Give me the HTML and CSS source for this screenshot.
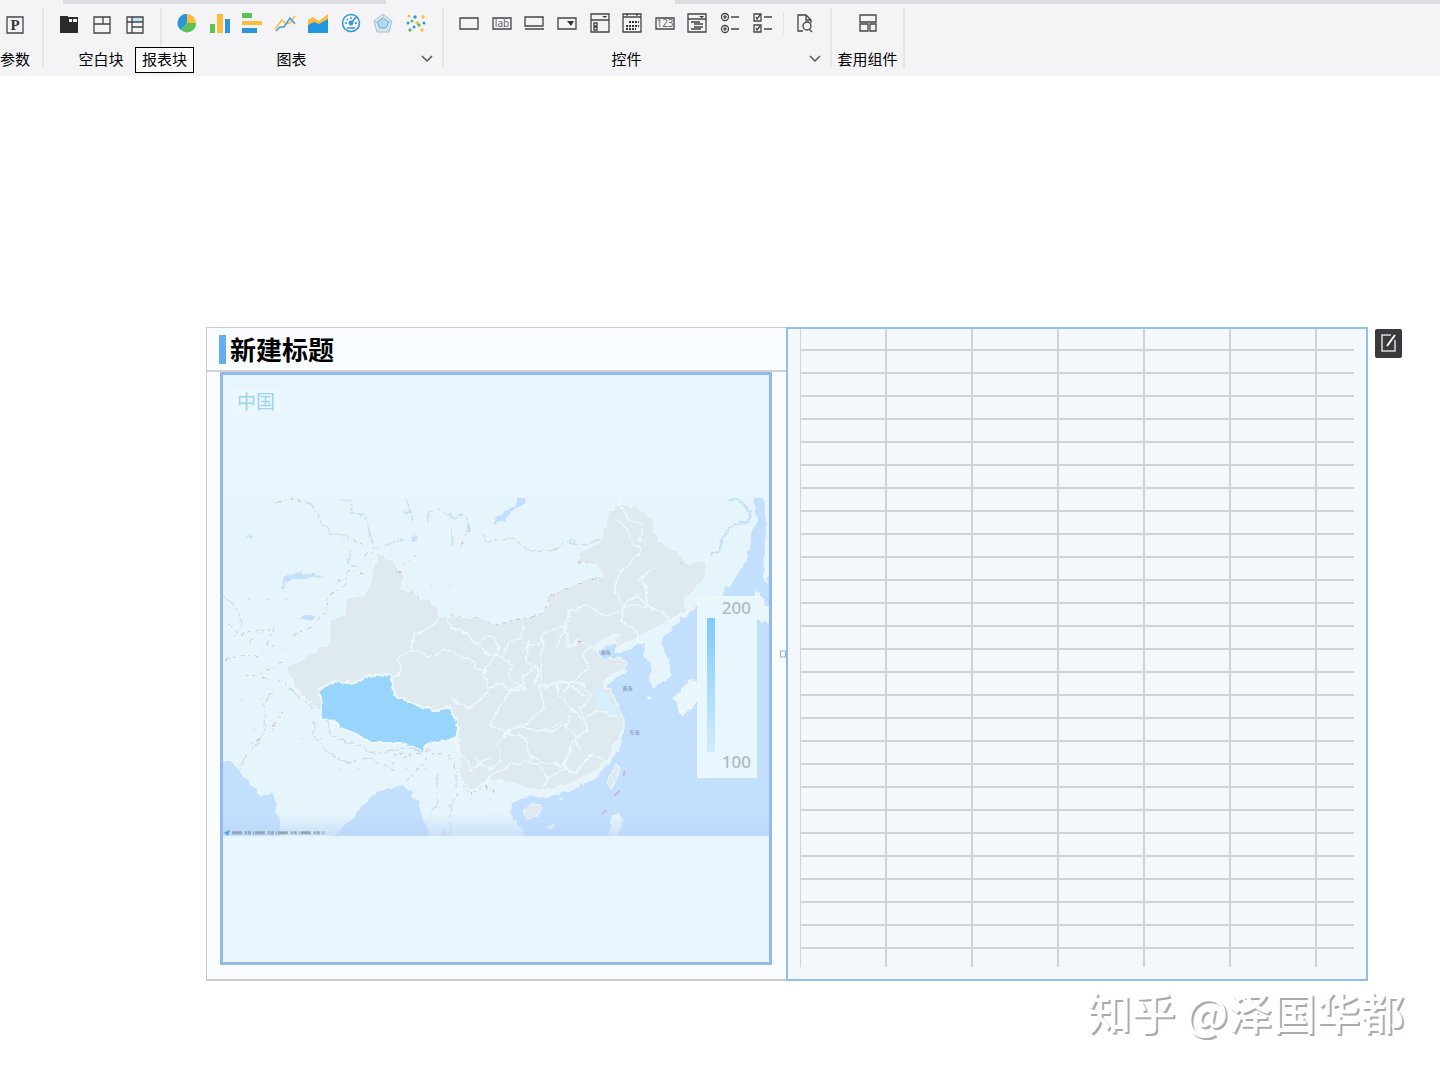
FILE: index.html
```html
<!DOCTYPE html>
<html lang="zh-CN">
<head>
<meta charset="utf-8">
<title>报表设计</title>
<link rel="stylesheet" href="styles.css">
</head>
<body>
<div class="tabstrip"><span class="tab tab-gap"></span><span class="tab tab-mid"></span><span class="tab tab-active"></span><span class="tab tab-rest"></span></div>
<header class="toolbar">
  <section class="group group-param">
    <div class="icons">
      <button class="tool" aria-label="参数"><svg viewBox="0 0 22 22"><path class="ln" d="M3 5h16v16H3z"/><text x="11" y="18" class="p-letter">P</text></svg></button>
    </div>
    <div class="caption"><span>参数</span></div>
  </section>
  <section class="group group-block">
    <div class="icons">
      <button class="tool" aria-label="空白块"><svg viewBox="0 0 22 22"><path fill="#2b2b2e" d="M2 4h8v1h10v16H2z"/><path fill="#f4f4f7" d="M11 7h3v3h-3zM15 7h4v3h-4z"/></svg></button>
      <button class="tool" aria-label="分块"><svg viewBox="0 0 22 22"><path class="ln" d="M3 5h16v16H3zM3 12h16M12 5v7"/></svg></button>
      <button class="tool" aria-label="报表块"><svg viewBox="0 0 22 22"><path fill="#bfe6f7" d="M8 5h12v5H8z"/><path class="ln" d="M3 5h16v16H3zM3 10h16M8 5v16M8 15h11"/></svg></button>
    </div>
    <div class="caption"><span>空白块</span></div>
    <span class="tip" role="tooltip">报表块</span>
  </section>
  <section class="group group-chart">
    <div class="icons">
      <button class="tool" aria-label="饼图"><svg viewBox="0 0 22 22"><path fill="#fcbc3c" d="M11 11V2a9 9 0 0 1 9 9z"/><path fill="#5bc254" d="M11 11h9a9 9 0 0 1-15 7z"/><path fill="#2c95dc" d="M11 11l-6 7A9 9 0 0 1 11 2z"/></svg></button>
      <button class="tool" aria-label="柱形图"><svg viewBox="0 0 22 22"><path fill="#5bc254" d="M1 12h5v9H1z"/><path fill="#fcbc3c" d="M8 2h6v19H8z"/><path fill="#2c95dc" d="M16 7h5v14h-5z"/></svg></button>
      <button class="tool" aria-label="条形图"><svg viewBox="0 0 22 22"><path fill="#5bc254" d="M1 1h10v5H1z"/><path fill="#fcbc3c" d="M1 9h20v4H1z"/><path fill="#2c95dc" d="M1 16h15v5H1z"/></svg></button>
      <button class="tool" aria-label="折线图"><svg viewBox="0 0 22 22" fill="none" stroke-width="1.5"><path stroke="#fcbc3c" d="M1 17l7-9 4 4 4-1 5-7"/><path stroke="#3f9ddc" d="M2 19l4-4h4l6-9 5 6"/></svg></button>
      <button class="tool" aria-label="面积图"><svg viewBox="0 0 22 22"><path fill="#fcbc3c" d="M1 8l5-3 6 4 9-7v12H1z"/><path fill="#2196e3" d="M1 13l6-3 5 2 9-5v14H1z"/></svg></button>
      <button class="tool" aria-label="仪表盘"><svg viewBox="0 0 22 22" fill="none" stroke="#2c95dc"><circle cx="11" cy="11" r="8.500" stroke-width="1.500"/><path stroke-width="1.500" d="M5 11h2M15 11h2M11 5v2M7 7l1 1M7 16h8M12 10l4-5"/><circle cx="11" cy="11" r="2" fill="#2c95dc"/></svg></button>
      <button class="tool" aria-label="雷达图"><svg viewBox="0 0 22 22"><path fill="#dbe8f0" stroke="#a9bfce" d="M11 2l9 7-3 11H5L2 9z"/><path fill="#b5daf2" stroke="#5aa9dd" d="M11 6l6 4-3 6H8L5 10z"/><path fill="none" stroke="#b4cfe0" stroke-width=".7" d="M11 2v9l9-2M11 11l6 9M11 11l-6 9M11 11L2 9"/></svg></button>
      <button class="tool" aria-label="散点图"><svg viewBox="0 0 22 22"><g fill="#fcbc3c"><circle cx="4" cy="4" r="1.500"/><circle cx="18" cy="5" r="1.700"/><circle cx="12" cy="11" r="1.700"/><circle cx="17" cy="18" r="1.700"/></g><g fill="#2c95dc"><circle cx="10" cy="5" r="1.700"/><circle cx="3" cy="11" r="1.500"/><circle cx="19" cy="11" r="1.500"/><circle cx="9" cy="15" r="1.500"/></g><g fill="#5bc254"><circle cx="7" cy="9" r="1.500"/><circle cx="14" cy="13" r="1.700"/><circle cx="5" cy="18" r="1.700"/></g></svg></button>
    </div>
    <div class="caption"><span>图表</span><button class="more" aria-label="更多图表"><svg viewBox="0 0 12 8"><path d="M1 1l5 5 5-5"/></svg></button></div>
  </section>
  <section class="group group-control">
    <div class="icons">
      <button class="tool" aria-label="文本框"><svg viewBox="0 0 22 22"><path class="ln" d="M2 6h18v11H2z"/></svg></button>
      <button class="tool" aria-label="标签"><svg viewBox="0 0 22 22"><path class="ln" d="M2 6h18v11H2z"/><text x="11" y="15" class="tiny">lab</text></svg></button>
      <button class="tool" aria-label="按钮"><svg viewBox="0 0 22 22"><path class="ln" d="M2 5h18v9H2zM2 17h19"/></svg></button>
      <button class="tool" aria-label="下拉框"><svg viewBox="0 0 22 22"><path class="ln" d="M2 6h18v11H2z"/><path fill="#333" d="M11 9h7l-3 5z"/></svg></button>
      <button class="tool" aria-label="下拉复选框"><svg viewBox="0 0 22 22"><path class="ln" d="M2 2h18v18H2zM2 8h18M5 11h3v3H5zM5 15h3v3H5z"/><path fill="#333" d="M13 4h5l-2 2z"/></svg></button>
      <button class="tool" aria-label="日期"><svg viewBox="0 0 22 22"><path class="ln" d="M2 2h18v18H2zM2 5h18M6 1v3M16 1v3"/><path stroke="#333" stroke-width="2" stroke-dasharray="2 1" d="M8 10h10M5 14h13M5 17h10"/></svg></button>
      <button class="tool" aria-label="数字"><svg viewBox="0 0 22 22"><path class="ln" d="M2 6h18v11H2z"/><text x="11" y="15" class="tiny">123</text></svg></button>
      <button class="tool" aria-label="下拉树"><svg viewBox="0 0 22 22"><path class="ln" d="M2 2h18v18H2zM2 7h18M5 10h9M8 12h9M8 15h9M5 17h10"/><path fill="#333" d="M13 4h5l-2 2z"/></svg></button>
      <button class="tool" aria-label="单选按钮组"><svg viewBox="0 0 22 22"><g class="ln"><circle cx="6" cy="5" r="3.500"/><circle cx="6" cy="5" r="1"/><circle cx="6" cy="17" r="3.500"/><circle cx="6" cy="17" r="1"/><path d="M12 5h8M12 17h8"/></g></svg></button>
      <button class="tool" aria-label="复选框组"><svg viewBox="0 0 22 22"><path class="ln" d="M2 2h7v7H2zM2 13h7v7H2zM4 5l1 2 3-4M4 16l1 2 3-4M12 5h8M12 17h8"/></svg></button>
      <span class="divider"></span>
      <button class="tool" aria-label="查询"><svg viewBox="0 0 22 22"><path class="ln" d="M9 19H4V3h8l5 5v3M12 3v5h5"/><circle class="ln" cx="13" cy="14" r="4"/><path class="ln" d="M15 17l3 3"/></svg></button>
    </div>
    <div class="caption"><span>控件</span><button class="more" aria-label="更多控件"><svg viewBox="0 0 12 8"><path d="M1 1l5 5 5-5"/></svg></button></div>
  </section>
  <section class="group group-widget">
    <div class="icons">
      <button class="tool" aria-label="套用组件"><svg viewBox="0 0 22 22"><path class="ln" d="M3 3h16v7H3zM3 12h8v7H3zM13 12h6v7h-6z"/></svg></button>
    </div>
    <div class="caption"><span>套用组件</span></div>
  </section>
</header>
<main class="canvas">
  <div class="board">
    <section class="pane">
      <h1 class="title">新建标题</h1>
      <div class="chart">
        <div class="crumb">中国</div>
        <div class="map">
          <svg viewBox="222 498 548 339" role="img" aria-label="中国地图">
            <defs>
              <filter id="coast" x="-5%" y="-5%" width="110%" height="110%" color-interpolation-filters="sRGB"><feTurbulence type="fractalNoise" baseFrequency="0.120" numOctaves="3" seed="4"/><feDisplacementMap in="SourceGraphic" scale="7" xChannelSelector="R" yChannelSelector="G"/></filter>
              <linearGradient id="foot" x1="0" y1="0" x2="0" y2="1"><stop offset="0" stop-color="#b9d3f6" stop-opacity="0"/><stop offset="1" stop-color="#b9d3f6" stop-opacity=".6"/></linearGradient>
            </defs>
            <rect x="222" y="498" width="548" height="339" fill="#e6f4fb"/>
            <g filter="url(#coast)">
              <g fill="#c3dffe">
                <path d="M754 490l4 30-6 20-5 23-12 18-15 16-30 15-15 14-15 17 7 10 5 10 0 14-19 13-3-7 2-20-9-6 4-14-17 7-13 5-2-6 6-7-13 3-14 10 10 11 14 0 10 4-3 5-15 8-5 10 8 9 7 12 5 16-4 14-11 20-14 15-23 12-30 8-13-2-17 7-3 10 8 12 12 18 260 5V490z"/>
                <path d="M215 762h15l17 21 13 15 10-5 5 10 5 42h-65z"/>
                <path d="M328 843l25-26 24-24 26-7 17 21 10 36zM437 843l8-12 5 12z"/>
                <path d="M492 524l9-10 10-6 10-12h6l-4 8-12 8-8 10z"/>
                <path d="M279 588l5-10 12-5 24 3 2 2-26 0-12 5-1 7zM246 535l7-1-3 4zM300 619l6-4h8l-3 5-6 1zM334 580l6 1-2 4zM411 536l6 0 1 5-6 0zM467 525l3-1-1 10-3-2zM402 510l9 1-4 3zM348 561l4 4 7 2-6 1z"/>
              </g>
              <g fill="#e9f7fc">
                <path d="M763 490h9v60l-3 34-5-6 1-30 3-20zM757 590l10 14 6 10v14l-16-10zM673 700l10-12 8-7 9 1-2 18-8 12-7 6-4-10-4-5zM612 817l8-3 4 8-5 14-12 3 4-8zM648 697h4v3h-4zM560 798h3v2h-3zM547 827l8-1-2 6z"/>
              </g>
              <path fill="#deeaef" stroke="#eff9fd" d="M377 553l15 8 10 9v20l18 7 17 10 3 10 33 1 24 7 20-5 23-5 8-10-1-8 20-9 23-10 15-2-8-11-19-3 5-12 17-8 7-19 3-13 13-7 20 7 10 10 5 20 19 12 13 13 18-5-5 20-8 12-10 5 2 13-10 7-17 10-13 6-17 10-13 5-2-6 6-7-13 3-14 10 10 11 14 0 10 4-3 5-15 8-5 10 8 9 7 12 5 16-4 14-11 20-14 15-23 12-30 8-13-2-17-6-20-3-23 10-9-10-3-43-138-25-23-22-12-23 20-10 24-16 1-22 15-5 2-17 18-3 4-10z"/>
              <path fill="#deeaef" stroke="#eff9fd" d="M617 765l3 6-8 20-5-9zM525 811l6-6h8l3 5-5 6-8 4-5-4z"/>
              <path fill="#d4effd" d="M595 689l10 1 9 15 6 12-8 1-11-10z"/>
              <g class="province">
                <path d="M440 615l-8 12-18 9-2 15-14 6 4 16-10 5 1 18 25 10 17 6 13-4 5 6 2 30 4 10 8 8 5 10 7-10 12-4"/>
                <path d="M412 651l18 6 17-7 20 9 17 16 6 14 12-6 8 9 16-2-4-12 12-9M446 614l6 16 16 4 7 9 17-7 8 15-10 11-7 11M452 700l14 8 12-5 11-11"/>
                <path d="M475 643l14 12 14 2 6-15 12-4 2-12M503 657l8 9-3 12 13 9M529 640l-2 20 12 12-5 14M521 651l21-9 3-9 20-8 4-13 18-7 17 12 13-4 14-8 15 2 2-14-7-14 12-8"/>
                <path d="M543 642l-3 46 14-4 12-1 17 12M565 625l3 23 10-8 14 7-9 9 5 13-17 14-7 10M570 620l-13 28M525 688l-13 2-13 18-9 18 16 5 20-3 15 4 20-8M540 688l4 20-15 16-20 8-10 11 2 17-13 12-14-14"/>
                <path d="M505 733l20 6 6 22-21 5-18 9-6 10M529 728l18 5 19-6 10 8-5 16-8 16-22-4-13-8M530 763l11 5 8 12-9 15M576 735l-12 34 12 5 14-17 14 2M566 727l7-17-13-14-3-11M573 710l9 11 13-8 11 1 11 3M549 780l17-12M558 682l24 2 8 12-9 14 7 21-13 7 6 15"/>
                <path d="M618 520l9 8 4 13 11 8-12 16-12 12-3 16 9 12 14-9 10 10 14 6 8 9 14-6M620 501l8 18 16 6-3 17M625 604l-4 17 14 9 8 17"/>
              </g>
              <path fill="#98d5fc" stroke="#eff9fd" stroke-width="2" d="M318 691l12-8 23 1 17-8 20-1 5 22 25 10 17 6 13-5 8 19-2 13-22 3-13 8-21-7-27 0-20-10-20-11-15-5 4-13z"/>
            </g>
            <g filter="url(#coast)" class="river">
              <path d="M305 500l12 14 11 20 24 4M340 500l10 0 1 14 14 0 4 20 4 15M350 550l-1 14 8 2M406 500l4 10 2 14M426 522l4-9 8-3 14 7 12-2 7 11M452 545v-18M385 547l18-8M480 535l8 6 25-2 18 12 22 1 16-11 16 3 15-4M222 596l12 10 7 18-8 14M272 690l-8 15-1 27-8 16-12 10-3 12M314 723l-1 13 12 16 17 11 28-3 24 11 0-16 12-1M326 722l6 15 20 8 24 9 20-4 36 1M437 775v30l-7 10M456 776v20l-6 12v28M290 690l22 18"/>
              <path class="amur" d="M711 556l9-5 4-15 10-10 15-4 3-10-10-10-12-3"/>
            </g>
            <g filter="url(#coast)" class="frontier">
              <path d="M292 635l20-7 14-17 2-14 16-12 1-13 20 1M365 556l14-8M402 590l18 7M450 616l15 1M474 618l23 7 21-4 22-6 8-10 3-8 25-12 22-8M578 562l16 2M680 562l11 4M248 643l12-9 14-6-8 16 12 3M362 546l-8-8-12 4M225 660l20-5 14 3M282 664l-16 8-24 6M262 678l28 7M250 746l18-13 15-20M402 760l18-8 30 4 8 18M405 784l14-16 12-11M462 786l8 10 14-8 14 6M228 625l12 10 18-6"/>
              <path d="M276 505l12-6 14 2M470 528l-10 22M398 573l20-20"/>
            </g>
            <path class="claim" d="M624 777l1-5M615 797l5-5M602 816l5-5M578 642h4"/>
            <path class="fleck" d="M240 700h28M252 730h30M338 770h26M300 740h48M405 770h27M470 800h28M262 650h22M247 600h50M430 586h32M245 520h42M448 760h22M495 815h18"/>
            <g class="sea-name"><text x="601" y="655">渤海</text><text x="623" y="691">黄海</text><text x="630" y="735">东海</text></g>
            <rect x="222" y="815" width="548" height="22" fill="url(#foot)"/>
            <path fill="#4ba7e8" d="M223 834l6-3-2 6z"/><path class="credit" d="M231 834h93"/>
          </svg>
          <div class="legend"><span>200</span><i class="scale"></i><span>100</span></div>
        </div>
      </div>
      <span class="handle"></span>
    </section>
    <section class="sheet">
      <table aria-label="报表块">
        <colgroup><col class="c"><col class="c"><col class="c"><col class="c"><col class="c"><col class="c"><col></colgroup>
        <tbody>
        <tr><td></td><td></td><td></td><td></td><td></td><td></td><td></td></tr>
        <tr><td></td><td></td><td></td><td></td><td></td><td></td><td></td></tr>
        <tr><td></td><td></td><td></td><td></td><td></td><td></td><td></td></tr>
        <tr><td></td><td></td><td></td><td></td><td></td><td></td><td></td></tr>
        <tr><td></td><td></td><td></td><td></td><td></td><td></td><td></td></tr>
        <tr><td></td><td></td><td></td><td></td><td></td><td></td><td></td></tr>
        <tr><td></td><td></td><td></td><td></td><td></td><td></td><td></td></tr>
        <tr><td></td><td></td><td></td><td></td><td></td><td></td><td></td></tr>
        <tr><td></td><td></td><td></td><td></td><td></td><td></td><td></td></tr>
        <tr><td></td><td></td><td></td><td></td><td></td><td></td><td></td></tr>
        <tr><td></td><td></td><td></td><td></td><td></td><td></td><td></td></tr>
        <tr><td></td><td></td><td></td><td></td><td></td><td></td><td></td></tr>
        <tr><td></td><td></td><td></td><td></td><td></td><td></td><td></td></tr>
        <tr><td></td><td></td><td></td><td></td><td></td><td></td><td></td></tr>
        <tr><td></td><td></td><td></td><td></td><td></td><td></td><td></td></tr>
        <tr><td></td><td></td><td></td><td></td><td></td><td></td><td></td></tr>
        <tr><td></td><td></td><td></td><td></td><td></td><td></td><td></td></tr>
        <tr><td></td><td></td><td></td><td></td><td></td><td></td><td></td></tr>
        <tr><td></td><td></td><td></td><td></td><td></td><td></td><td></td></tr>
        <tr><td></td><td></td><td></td><td></td><td></td><td></td><td></td></tr>
        <tr><td></td><td></td><td></td><td></td><td></td><td></td><td></td></tr>
        <tr><td></td><td></td><td></td><td></td><td></td><td></td><td></td></tr>
        <tr><td></td><td></td><td></td><td></td><td></td><td></td><td></td></tr>
        <tr><td></td><td></td><td></td><td></td><td></td><td></td><td></td></tr>
        <tr><td></td><td></td><td></td><td></td><td></td><td></td><td></td></tr>
        <tr><td></td><td></td><td></td><td></td><td></td><td></td><td></td></tr>
        <tr><td></td><td></td><td></td><td></td><td></td><td></td><td></td></tr>
        <tr><td></td><td></td><td></td><td></td><td></td><td></td><td></td></tr>
        </tbody>
      </table>
      <button class="edit" aria-label="编辑"><svg viewBox="0 0 27 29"><path fill="none" stroke="#ddd" stroke-width="1.500" d="M16 6H7v16h13V11"/><path stroke="#fff" stroke-width="2" d="M12 17l8-11"/></svg></button>
    </section>
  </div>
  <p class="watermark">知乎 @泽国华都</p>
</main>
</body>
</html>
```
FILE: styles.css
```css
* { box-sizing: border-box; }
body {
  margin: 0;
  background: #fff;
  color: #000;
  font-family: "Noto Sans", "Noto Sans CJK SC", sans-serif;
}
button { padding: 0; border: 0; background: none; }
svg { display: block; width: 100%; }

.tabstrip { display: flex; height: 4px; background: #f4f4f7; }
.tab { height: 4px; }
.tab-gap { width: 63px; }
.tab-mid { width: 323px; background: #dcdce1; }
.tab-active { width: 289px; }
.tab-rest { flex: 1; background: #dcdce1; }

.toolbar {
  display: flex;
  height: 72px;
  padding: 4px 0 8px;
  background: #f4f4f7;
  font-family: "Noto Sans CJK SC", sans-serif;
}
.group {
  position: relative;
  display: flex;
  flex-direction: column;
  justify-content: space-between;
  flex: none;
  padding-top: 4px;
  border-right: 2px solid #e6e6e3;
}
.group-param { width: 44px; }
.group-param .icons { padding-left: 4px; }
.group-param .caption { justify-content: flex-start; }
.group-block { width: 118px; }
.group-block .icons { padding: 0 14px; }
.group-block .caption { padding-right: 2px; }
.group-chart { width: 282px; }
.group-chart .icons { padding: 0 15px 0 14px; }
.group-control { width: 388px; }
.group-control .icons { padding: 0 14px; }
.group-widget { width: 73px; }
.group-widget .icons { justify-content: center; }
.icons { display: flex; justify-content: space-between; align-items: center; height: 22px; }
.tool { width: 22px; height: 22px; }
.divider { width: 1px; height: 22px; margin: 0 -1px; background: #e2e2e4; }
.caption { display: flex; justify-content: center; align-items: center; height: 18px; font-size: 15px; line-height: 18px; white-space: nowrap; }
.group-chart .caption span, .group-control .caption span { flex: 1; text-align: center; }
.more { width: 12px; margin-right: 9px; }
.more path { fill: none; stroke: #555; stroke-width: 1.5; }
.tip {
  position: absolute;
  z-index: 1;
  left: 91px;
  top: 39px;
  padding: 2px 6px 4px;
  border: 1px solid #000;
  background: #fff;
  font-size: 15px;
  line-height: 18px;
  white-space: nowrap;
}
.ln { fill: none; stroke: #444; stroke-width: 1.3; }
.p-letter { font: bold 15px "Liberation Serif", serif; text-anchor: middle; fill: #333; }
.tiny { font: 10px "Noto Sans", sans-serif; text-anchor: middle; fill: #666; }

.canvas { padding: 251px 72px 34px 206px; }
.board { display: grid; grid-template-columns: 1fr 1fr; }

.pane {
  position: relative;
  display: flex;
  flex-direction: column;
  border: 1px solid #c9cbce;
  border-width: 1px 0 2px 1px;
  background: #fafdff;
}
.title {
  margin: 0;
  padding: 6px 12px;
  border-bottom: 2px solid #d0d2d5;
  font: bold 26px/30px "Noto Sans CJK SC", sans-serif;
  display: flex;
  align-items: center;
  gap: 4px;
}
.title::before { content: ""; width: 7px; height: 29px; background: #65aff0; }
.chart {
  flex: 1;
  margin: 0 15px 14px 13px;
  border: 3px solid #94bae9;
  background: #e7f6fe;
}
.crumb {
  width: 50px;
  margin: 12px 9px 84px;
  padding: 0 5px;
  background: #eaf8fe;
  color: #9fd3ea;
  font: 19px/27px "Noto Sans CJK SC", sans-serif;
  white-space: nowrap;
}
.map { position: relative; }
.province { fill: none; stroke: #eff9fd; stroke-width: 1.5; }
.river { fill: none; stroke: #c7dcef; stroke-width: 1.2; stroke-dasharray: 14 2 5 3; }
.amur { stroke: #c3dffe; stroke-width: 2; stroke-dasharray: none; }
.frontier { fill: none; stroke: #cdbfca; stroke-width: 1; stroke-dasharray: 4 4 2 5; }
.claim { fill: none; stroke: #cfadd0; stroke-width: 1.5; }
.fleck { fill: none; stroke: #d3dce9; stroke-width: 1; stroke-dasharray: 2 9 1 7; }
.sea-name { font: 5px "Noto Sans CJK SC", sans-serif; fill: #69809b; }
.credit { fill: none; stroke: #93a6b4; stroke-width: 3; stroke-dasharray: 10 3 2 1 3 2 1 1; }
.legend {
  position: absolute;
  top: 29%;
  right: 12px;
  width: 60px;
  height: 182px;
  display: flex;
  flex-direction: column;
  justify-content: space-between;
  padding: 0 6px 4px 10px;
  background: rgba(235, 248, 253, .92);
  color: #b0bac0;
  font-size: 17px;
  font-weight: 500;
  line-height: 24px;
  text-align: right;
}
.scale { flex: 1; width: 8px; margin: -2px 0; background: linear-gradient(#7fcafb, #d0ecfd); }
.handle {
  position: absolute;
  z-index: 1;
  right: 1px;
  top: 50%;
  width: 6px;
  height: 7px;
  border: 1px solid #84b5dc;
  background: #fff;
  transform: translateY(-50%);
}
.sheet {
  position: relative;
  margin-left: -1px;
  padding: 0 12px 12px;
  border: 2px solid #8fc0ec;
  background: #f4f8fd;
}
.sheet table {
  width: 100%;
  table-layout: fixed;
  border-spacing: 0;
  border-left: 1px solid #d3d6d9;
}
.c { width: 86px; }
.sheet td { height: 23px; padding: 0; border: 2px solid #d0d3d6; border-width: 0 2px 2px 0; }
.sheet td:last-child { border-right: 0; }
.sheet tr:first-child td { height: 22px; }
.sheet tr:last-child td { height: 18px; border-bottom: 0; }
.edit {
  position: absolute;
  left: 100%;
  top: 0;
  width: 27px;
  height: 29px;
  margin-left: 9px;
  border-radius: 2px;
  background: #393a3d;
}
.watermark {
  margin: 0 -36px 0 0;
  text-align: right;
  color: #fff;
  font: 500 44px/60px "Noto Sans CJK SC", sans-serif;
  text-shadow: 2px 2px 0 #aaa;
}
```
